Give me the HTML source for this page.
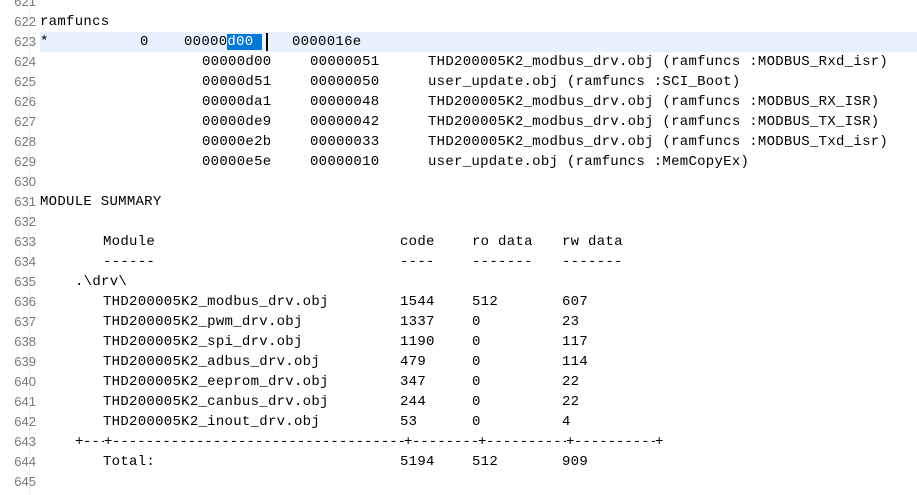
<!DOCTYPE html>
<html><head><meta charset="utf-8"><style>
body{margin:0;width:917px;height:495px;background:#fff;overflow:hidden;position:relative;font-family:"Liberation Mono",monospace;font-size:14px;}
.ln{position:absolute;left:0;width:36px;text-align:right;color:#787878;font-family:"Liberation Sans",sans-serif;font-size:13px;line-height:20px;}
.t{position:absolute;white-space:pre;line-height:20px;color:#000;letter-spacing:0.28px}
.d{position:absolute;white-space:pre;line-height:20px;color:#000;overflow:hidden}
.gut{position:absolute;left:29px;top:0;width:1px;height:495px;background:#eeeeee}
.hl{position:absolute;left:40px;top:32px;width:877px;height:20px;background:#e8f2fe}
.sel{background:#0078d7;color:#fff}
.caret{position:absolute;left:266px;top:33px;width:2px;height:18px;background:#000}
</style></head><body>
<div class="gut"></div>
<div class="hl"></div>
<div class="caret"></div>
<div id="c"></div>
<script>
var rows=[
[621,[]],
[622,[[40,"ramfuncs"]]],
[623,[[40,"*"],[140,"0"],[184,"00000<span class=sel>d00 </span>"],[292,"0000016e"]]],
[624,[[202,"00000d00"],[310,"00000051"],[428,"THD200005K2_modbus_drv.obj (ramfuncs :MODBUS_Rxd_isr)"]]],
[625,[[202,"00000d51"],[310,"00000050"],[428,"user_update.obj (ramfuncs :SCI_Boot)"]]],
[626,[[202,"00000da1"],[310,"00000048"],[428,"THD200005K2_modbus_drv.obj (ramfuncs :MODBUS_RX_ISR)"]]],
[627,[[202,"00000de9"],[310,"00000042"],[428,"THD200005K2_modbus_drv.obj (ramfuncs :MODBUS_TX_ISR)"]]],
[628,[[202,"00000e2b"],[310,"00000033"],[428,"THD200005K2_modbus_drv.obj (ramfuncs :MODBUS_Txd_isr)"]]],
[629,[[202,"00000e5e"],[310,"00000010"],[428,"user_update.obj (ramfuncs :MemCopyEx)"]]],
[630,[]],
[631,[[40,"MODULE SUMMARY"]]],
[632,[]],
[633,[[103,"Module"],[400,"code"],[472,"ro data"],[562,"rw data"]]],
[634,[[103,"------"],[400,"----"],[472,"-------"],[562,"-------"]]],
[635,[[75,".\\drv\\"]]],
[636,[[103,"THD200005K2_modbus_drv.obj"],[400,"1544"],[472,"512"],[562,"607"]]],
[637,[[103,"THD200005K2_pwm_drv.obj"],[400,"1337"],[472,"0"],[562,"23"]]],
[638,[[103,"THD200005K2_spi_drv.obj"],[400,"1190"],[472,"0"],[562,"117"]]],
[639,[[103,"THD200005K2_adbus_drv.obj"],[400,"479"],[472,"0"],[562,"114"]]],
[640,[[103,"THD200005K2_eeprom_drv.obj"],[400,"347"],[472,"0"],[562,"22"]]],
[641,[[103,"THD200005K2_canbus_drv.obj"],[400,"244"],[472,"0"],[562,"22"]]],
[642,[[103,"THD200005K2_inout_drv.obj"],[400,"53"],[472,"0"],[562,"4"]]],
[643,[]],
[644,[[103,"Total:"],[400,"5194"],[472,"512"],[562,"909"]]],
[645,[]]];
var h="";
rows.forEach(function(r,i){var y=-8+i*20;
h+='<div class="ln" style="top:'+y+'px">'+r[0]+'</div>';
r[1].forEach(function(s){h+='<div class="t" style="top:'+y+'px;left:'+s[0]+'px">'+s[1]+'</div>';});});
var plus=[75,104,404,478,566,655],y=-8+22*20;
for(var k=0;k<plus.length;k++){h+='<div class="d" style="top:'+y+'px;left:'+plus[k]+'px">+</div>';
if(k<plus.length-1){var a=plus[k]+8,b=plus[k+1];h+='<div class="d" style="top:'+y+'px;left:'+a+'px;width:'+(b-a)+'px">'+"-".repeat(60)+'</div>';}}
document.getElementById("c").innerHTML=h;
</script>
</body></html>
